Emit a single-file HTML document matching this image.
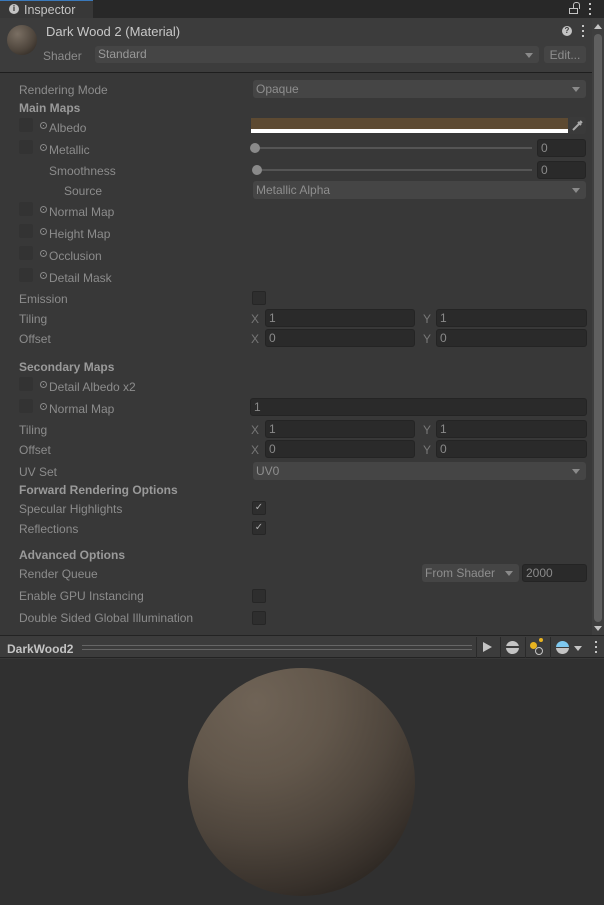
<!DOCTYPE html>
<html><head><meta charset="utf-8"><style>
*{box-sizing:border-box;margin:0;padding:0}
body{width:604px;height:905px;background:#383838;font-family:"Liberation Sans",sans-serif;font-size:12px;color:#8c8c8c;position:relative;overflow:hidden}
.a{position:absolute}
.l{position:absolute;height:16px;line-height:18px;white-space:nowrap}
.b{font-weight:bold;color:#9a9a9a}
.f{position:absolute;height:18px;background:#2a2a2a;border:1px solid #242424;border-radius:3px;line-height:17px;padding-left:3px;color:#8a8a8a}
.d{position:absolute;height:18px;background:#454545;border-radius:3px;line-height:19px;padding-left:3px;color:#8e8e8e}
.d:after{content:"";position:absolute;right:6px;top:7px;border-left:4px solid transparent;border-right:4px solid transparent;border-top:5px solid #8a8a8a}
.t{position:absolute;width:14px;height:14px;background:#333;border-radius:2px}
.c{position:absolute;width:14px;height:14px;background:#2e2e2e;border:1px solid #262626;border-radius:2px;color:#aaa;font-size:10px;line-height:12px;text-align:center}
.o{position:absolute;width:7px;height:7px;border:1px solid #888;border-radius:50%}
.o:after{content:"";position:absolute;left:2px;top:2px;width:1px;height:1px;background:#888}
.xy{position:absolute;height:16px;line-height:18px;color:#777}
</style></head><body>
<div class="a" style="left:0;top:0;width:604px;height:18px;background:#282828"></div>
<div class="a" style="left:0;top:0;width:93px;height:18px;background:#383838;border-top:1px solid #3a79bb"></div>
<div class="a" style="left:9px;top:4px;width:10px;height:10px;border-radius:50%;background:#c4c4c4;color:#282828;font-size:8px;line-height:10px;text-align:center;font-weight:bold">i</div>
<div class="l" style="left:24px;top:1px;color:#c4c4c4;font-size:12.5px">Inspector</div>
<div class="a" style="left:569px;top:8px;width:9px;height:6px;border:1.5px solid #c4c4c4"></div>
<div class="a" style="left:573px;top:2px;width:7px;height:7px;border:1.5px solid #c4c4c4;border-bottom:none;border-radius:3px 3px 0 0"></div>
<div class="a" style="left:589px;top:3px;width:2px;height:12px;background:linear-gradient(#c4c4c4 0 2px,transparent 2px 5px,#c4c4c4 5px 7px,transparent 7px 10px,#c4c4c4 10px 12px)"></div>
<div class="a" style="left:0;top:18px;width:592px;height:55px;background:#3c3c3c;border-bottom:1px solid #1e1e1e"></div>
<div class="a" style="left:7px;top:25px;width:30px;height:30px;border-radius:50%;background:radial-gradient(circle at 35% 30%,#7a6f63,#4d443b 60%,#241f1b)"></div>
<div class="l" style="left:46px;top:23px;color:#c8c8c8;font-size:13px">Dark Wood 2 (Material)</div>
<div class="a" style="left:562px;top:26px;width:10px;height:10px;border-radius:50%;background:#c4c4c4;color:#3c3c3c;font-size:8px;line-height:10px;text-align:center;font-weight:bold">?</div>
<div class="a" style="left:582px;top:25px;width:2px;height:12px;background:linear-gradient(#c4c4c4 0 2px,transparent 2px 5px,#c4c4c4 5px 7px,transparent 7px 10px,#c4c4c4 10px 12px)"></div>
<div class="l" style="left:43px;top:47px">Shader</div>
<div class="d" style="left:95px;top:46px;width:444px;height:17px;line-height:17px;color:#999">Standard</div>
<div class="a" style="left:544px;top:46px;width:42px;height:17px;background:#454545;border-radius:3px;text-align:center;line-height:18px;color:#8e8e8e">Edit...</div>
<div class="a" style="left:592px;top:18px;width:12px;height:617px;background:#3e3e3e"></div>
<div class="a" style="left:594px;top:34px;width:8px;height:588px;background:#5f5f5f;border-radius:4px"></div>
<div class="a" style="left:594px;top:24px;border-left:4px solid transparent;border-right:4px solid transparent;border-bottom:5px solid #c4c4c4"></div>
<div class="a" style="left:594px;top:626px;border-left:4px solid transparent;border-right:4px solid transparent;border-top:5px solid #c4c4c4"></div>
<div class="l" style="left:19px;top:81px">Rendering Mode</div>
<div class="d" style="left:253px;top:80px;width:333px">Opaque</div>
<div class="l b" style="left:19px;top:99px">Main Maps</div>
<div class="t" style="left:19px;top:118px"></div><div class="o" style="left:40px;top:122px"></div><div class="l" style="left:49px;top:119px">Albedo</div>
<div class="a" style="left:251px;top:118px;width:317px;height:11px;background:#5d4a32"></div>
<div class="a" style="left:251px;top:129px;width:317px;height:4px;background:#fff"></div>
<div class="a" style="left:568px;top:117px;width:18px;height:17px;background:#3a3a3a;border-radius:3px"></div>
<svg class="a" style="left:571px;top:119px" width="13" height="13"><path d="M2 11 L8 5 M7 3 L10 6 M9 2 L11 4" stroke="#aaa" stroke-width="2" fill="none"/></svg>
<div class="t" style="left:19px;top:140px"></div><div class="o" style="left:40px;top:144px"></div><div class="l" style="left:49px;top:141px">Metallic</div>
<div class="a" style="left:255px;top:147px;width:277px;height:2px;background:#555"></div>
<div class="a" style="left:250px;top:143px;width:10px;height:10px;border-radius:50%;background:#8a8a8a"></div>
<div class="f" style="left:537px;top:139px;width:49px">0</div>
<div class="l" style="left:49px;top:162px">Smoothness</div>
<div class="a" style="left:257px;top:169px;width:275px;height:2px;background:#555"></div>
<div class="a" style="left:252px;top:165px;width:10px;height:10px;border-radius:50%;background:#8a8a8a"></div>
<div class="f" style="left:537px;top:161px;width:49px">0</div>
<div class="l" style="left:64px;top:182px">Source</div>
<div class="d" style="left:253px;top:181px;width:333px">Metallic Alpha</div>
<div class="t" style="left:19px;top:202px"></div><div class="o" style="left:40px;top:206px"></div><div class="l" style="left:49px;top:203px">Normal Map</div>
<div class="t" style="left:19px;top:224px"></div><div class="o" style="left:40px;top:228px"></div><div class="l" style="left:49px;top:225px">Height Map</div>
<div class="t" style="left:19px;top:246px"></div><div class="o" style="left:40px;top:250px"></div><div class="l" style="left:49px;top:247px">Occlusion</div>
<div class="t" style="left:19px;top:268px"></div><div class="o" style="left:40px;top:272px"></div><div class="l" style="left:49px;top:269px">Detail Mask</div>
<div class="l" style="left:19px;top:290px">Emission</div>
<div class="c" style="left:252px;top:291px"></div>
<div class="l" style="left:19px;top:310px">Tiling</div>
<div class="xy" style="left:251px;top:310px">X</div><div class="f" style="left:265px;top:309px;width:150px">1</div>
<div class="xy" style="left:423px;top:310px">Y</div><div class="f" style="left:436px;top:309px;width:151px">1</div>
<div class="l" style="left:19px;top:330px">Offset</div>
<div class="xy" style="left:251px;top:330px">X</div><div class="f" style="left:265px;top:329px;width:150px">0</div>
<div class="xy" style="left:423px;top:330px">Y</div><div class="f" style="left:436px;top:329px;width:151px">0</div>
<div class="l b" style="left:19px;top:358px">Secondary Maps</div>
<div class="t" style="left:19px;top:377px"></div><div class="o" style="left:40px;top:381px"></div><div class="l" style="left:49px;top:378px">Detail Albedo x2</div>
<div class="t" style="left:19px;top:399px"></div><div class="o" style="left:40px;top:403px"></div><div class="l" style="left:49px;top:400px">Normal Map</div>
<div class="f" style="left:250px;top:398px;width:337px">1</div>
<div class="l" style="left:19px;top:421px">Tiling</div>
<div class="xy" style="left:251px;top:421px">X</div><div class="f" style="left:265px;top:420px;width:150px">1</div>
<div class="xy" style="left:423px;top:421px">Y</div><div class="f" style="left:436px;top:420px;width:151px">1</div>
<div class="l" style="left:19px;top:441px">Offset</div>
<div class="xy" style="left:251px;top:441px">X</div><div class="f" style="left:265px;top:440px;width:150px">0</div>
<div class="xy" style="left:423px;top:441px">Y</div><div class="f" style="left:436px;top:440px;width:151px">0</div>
<div class="l" style="left:19px;top:463px">UV Set</div>
<div class="d" style="left:253px;top:462px;width:333px">UV0</div>
<div class="l b" style="left:19px;top:481px">Forward Rendering Options</div>
<div class="l" style="left:19px;top:500px">Specular Highlights</div>
<div class="c" style="left:252px;top:501px">✓</div>
<div class="l" style="left:19px;top:520px">Reflections</div>
<div class="c" style="left:252px;top:521px">✓</div>
<div class="l b" style="left:19px;top:546px">Advanced Options</div>
<div class="l" style="left:19px;top:565px">Render Queue</div>
<div class="d" style="left:422px;top:564px;width:97px">From Shader</div>
<div class="f" style="left:522px;top:564px;width:65px">2000</div>
<div class="l" style="left:19px;top:587px">Enable GPU Instancing</div>
<div class="c" style="left:252px;top:589px"></div>
<div class="l" style="left:19px;top:609px">Double Sided Global Illumination</div>
<div class="c" style="left:252px;top:611px"></div>
<div class="a" style="left:0;top:635px;width:604px;height:1px;background:#232323"></div>
<div class="a" style="left:0;top:636px;width:604px;height:22px;background:#3c3c3c;border-bottom:1px solid #232323"></div>
<div class="l" style="left:7px;top:640px;color:#c4c4c4;font-weight:bold;font-size:12px">DarkWood2</div>
<div class="a" style="left:82px;top:645px;width:390px;height:5px;border-top:1px solid #666;border-bottom:1px solid #666"></div>
<div class="a" style="left:476px;top:637px;width:1px;height:21px;background:#2a2a2a"></div>
<div class="a" style="left:483px;top:642px;border-top:5.5px solid transparent;border-bottom:5.5px solid transparent;border-left:9px solid #c4c4c4"></div>
<div class="a" style="left:500px;top:637px;width:1px;height:21px;background:#2a2a2a"></div>
<div class="a" style="left:506px;top:641px;width:13px;height:13px;border-radius:50%;background:linear-gradient(#c4c4c4 0 5px,#3c3c3c 5px 7px,#c4c4c4 7px)"></div>
<div class="a" style="left:525px;top:637px;width:1px;height:21px;background:#2a2a2a"></div>
<div class="a" style="left:530px;top:642px;width:7px;height:7px;border-radius:50%;background:#e8b320"></div>
<div class="a" style="left:539px;top:638px;width:4px;height:4px;border-radius:50%;background:#e8b320"></div>
<div class="a" style="left:535px;top:647px;width:8px;height:8px;border-radius:50%;border:1.5px solid #c4c4c4"></div>
<div class="a" style="left:550px;top:637px;width:1px;height:21px;background:#2a2a2a"></div>
<div class="a" style="left:556px;top:641px;width:13px;height:13px;border-radius:50%;background:linear-gradient(#7ec8ef 0 6px,#3c3c3c 6px 7px,#c4c4c4 7px)"></div>
<div class="a" style="left:574px;top:646px;border-left:4px solid transparent;border-right:4px solid transparent;border-top:5px solid #c4c4c4"></div>
<div class="a" style="left:595px;top:641px;width:2px;height:12px;background:linear-gradient(#c4c4c4 0 2px,transparent 2px 5px,#c4c4c4 5px 7px,transparent 7px 10px,#c4c4c4 10px 12px)"></div>
<div class="a" style="left:0;top:659px;width:604px;height:246px;background:#303030"></div>
<div class="a" style="left:188px;top:668px;width:227px;height:228px;border-radius:50%;background:radial-gradient(circle at 30% 15%,#6f6356 0%,#62574b 30%,#4e453c 55%,#38312b 75%,#221e1a 92%,#2a2420 100%)"></div>
</body></html>
